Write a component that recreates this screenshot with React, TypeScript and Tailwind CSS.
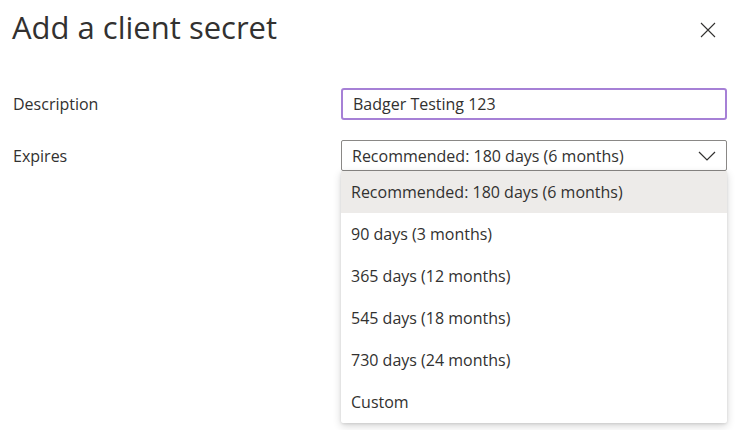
import React from 'react';

const options = [
    'Recommended: 180 days (6 months)',
    '90 days (3 months)',
    '365 days (12 months)',
    '545 days (18 months)',
    '730 days (24 months)',
    'Custom',
];

export default function App() {
    return (
        <div className="w-[740px] h-[430px] bg-white overflow-hidden text-[#323130]" style={{ fontFamily: '"Open Sans", "Noto Sans", sans-serif' }}>
            {/* Header */}
            <div className="flex justify-between items-start pl-[12px] pr-[24px] pt-[7px] h-[46px]">
                <h1 className="text-[31px] leading-[40px] font-normal">Add a client secret</h1>
                <button className="mt-[15px] w-[16px] h-[16px] text-[#323130]">
                    <svg viewBox="0 0 16 16" width="16" height="16" fill="none" stroke="currentColor" strokeWidth="1.1">
                        <path d="M1 1 L15 15 M15 1 L1 15" />
                    </svg>
                </button>
            </div>

            {/* Form */}
            <div className="mt-[42px] pl-[13px] pr-[13px]">
                <div className="flex items-center h-[32px]">
                    <label className="w-[328px] text-[16px]">Description</label>
                    <div className="flex-1 h-[32px] border-2 border-[#a680d6] rounded-[3px] flex items-center px-[10px] text-[16px]">
                        Badger Testing 123
                    </div>
                </div>

                <div className="flex items-start mt-[20px]">
                    <label className="w-[328px] text-[16px] leading-[32px]">Expires</label>
                    <div className="flex-1 relative">
                        <div className="h-[31px] border border-[#8a8886] rounded-[2px] flex items-center justify-between pl-[10px] pr-[10px] text-[16px]">
                            <span>Recommended: 180 days (6 months)</span>
                            <svg viewBox="0 0 18 10" width="18" height="10" fill="none" stroke="currentColor" strokeWidth="1.2">
                                <path d="M1 1 L9 9 L17 1" />
                            </svg>
                        </div>
                        {/* Dropdown list */}
                        <div className="absolute left-0 right-0 top-[31px] bg-white rounded-b-[2px] shadow-[0_3px_8px_rgba(0,0,0,0.16),0_1px_3px_rgba(0,0,0,0.1)]">
                            {options.map((o, i) => (
                                <div
                                    key={o}
                                    className={`h-[42px] flex items-center px-[10px] text-[16px] ${i === 0 ? 'bg-[#edebe9]' : ''}`}
                                >
                                    {o}
                                </div>
                            ))}
                        </div>
                    </div>
                </div>
            </div>
        </div>
    );
}
